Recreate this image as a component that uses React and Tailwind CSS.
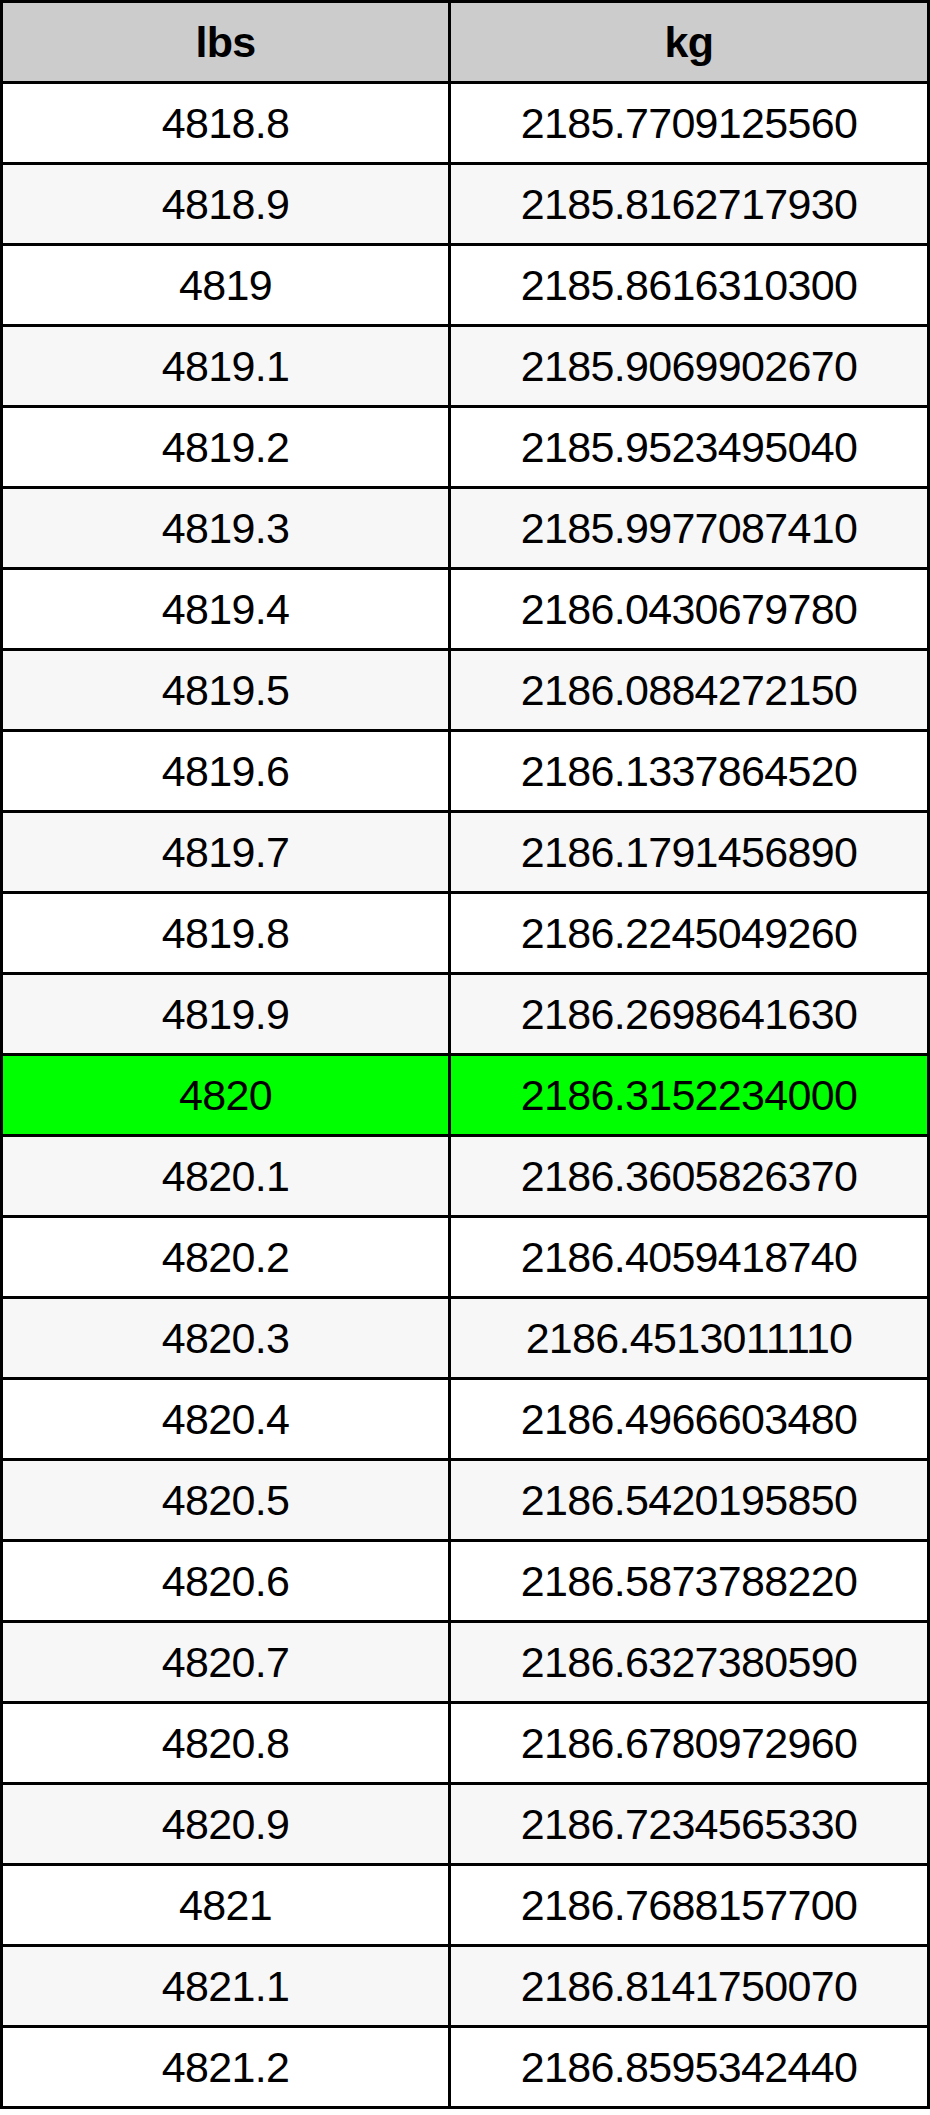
const rows = [
  ["4818.8", "2185.7709125560"],
  ["4818.9", "2185.8162717930"],
  ["4819", "2185.8616310300"],
  ["4819.1", "2185.9069902670"],
  ["4819.2", "2185.9523495040"],
  ["4819.3", "2185.9977087410"],
  ["4819.4", "2186.0430679780"],
  ["4819.5", "2186.0884272150"],
  ["4819.6", "2186.1337864520"],
  ["4819.7", "2186.1791456890"],
  ["4819.8", "2186.2245049260"],
  ["4819.9", "2186.2698641630"],
  ["4820", "2186.3152234000"],
  ["4820.1", "2186.3605826370"],
  ["4820.2", "2186.4059418740"],
  ["4820.3", "2186.4513011110"],
  ["4820.4", "2186.4966603480"],
  ["4820.5", "2186.5420195850"],
  ["4820.6", "2186.5873788220"],
  ["4820.7", "2186.6327380590"],
  ["4820.8", "2186.6780972960"],
  ["4820.9", "2186.7234565330"],
  ["4821", "2186.7688157700"],
  ["4821.1", "2186.8141750070"],
  ["4821.2", "2186.8595342440"],
];

function Cell({ children, bg, bold }) {
  return (
    <div
      className={`h-[81px] flex items-center justify-center border-r-[3px] border-b-[3px] border-black text-[43px] tracking-[-0.7px] text-black ${bg} ${bold ? "font-bold" : ""}`}
    >
      {children}
    </div>
  );
}

export default function App() {
  return (
    <div className="w-[930px] bg-white" style={{ fontFamily: '"Liberation Sans", Arial, sans-serif' }}>
      <div className="grid grid-cols-[448px_479px] border-l-[3px] border-t-[3px] border-black">
        <Cell bg="bg-[#cccccc]" bold>lbs</Cell>
        <Cell bg="bg-[#cccccc]" bold>kg</Cell>
        {rows.map(([lbs, kg], i) => {
          const bg = lbs === "4820" ? "bg-[#00ff00]" : i % 2 === 1 ? "bg-[#f7f7f7]" : "bg-white";
          return [
            <Cell key={lbs + "a"} bg={bg}>{lbs}</Cell>,
            <Cell key={lbs + "b"} bg={bg}>{kg}</Cell>,
          ];
        })}
      </div>
    </div>
  );
}
